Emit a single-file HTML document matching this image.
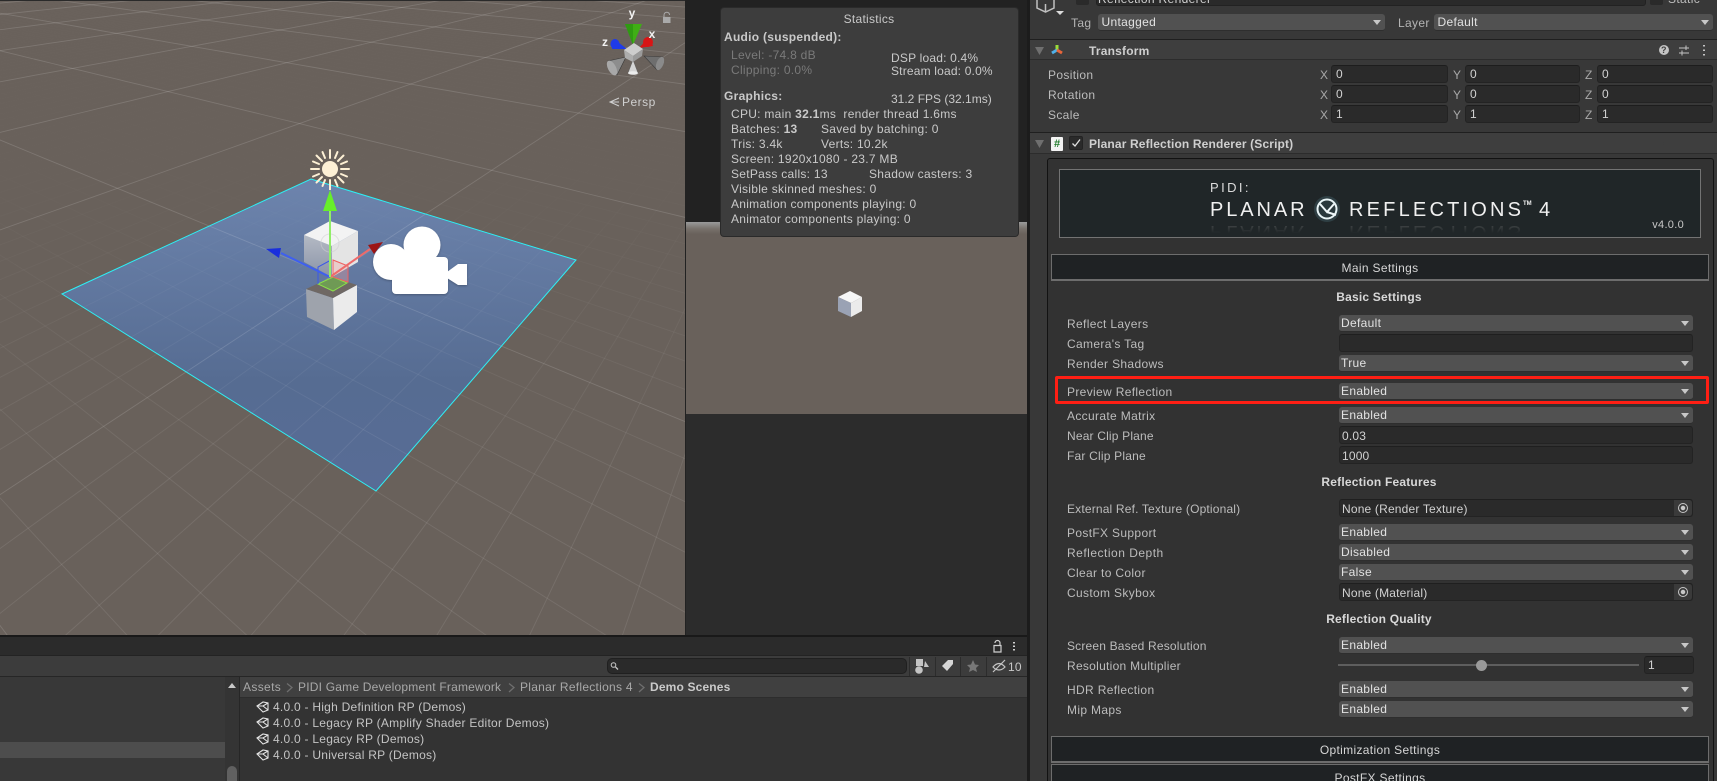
<!DOCTYPE html>
<html><head><meta charset="utf-8"><style>
html,body{margin:0;padding:0;width:1717px;height:781px;overflow:hidden;background:#1c1c1c}
body{position:relative;font-family:"Liberation Sans",sans-serif;font-size:12px;color:#c4c4c4}
div{position:absolute;box-sizing:border-box}
.t{white-space:nowrap;height:16px;line-height:16px;letter-spacing:.35px}
.l{left:1067px;color:#bcbcbc;letter-spacing:.34px}
.b{font-weight:bold;color:#d8d8d8;letter-spacing:.2px}
.c{transform:translateX(-50%)}
.dd{left:1339px;width:354px;height:16.5px;background:#515151;border-radius:3px;border-bottom:1px solid #2e2e2e;color:#e2e2e2;line-height:17px;padding-left:2px;letter-spacing:.32px}
.dd:after{content:"";position:absolute;right:4px;top:6px;border-left:4px solid transparent;border-right:4px solid transparent;border-top:5px solid #c8c8c8}
.f{left:1339px;width:354px;height:18px;background:#2a2a2a;border:1px solid #232323;border-top-color:#1f1f1f;border-radius:3px;color:#d2d2d2;line-height:18px;padding-left:2px;letter-spacing:.18px}
.v{height:18px;background:#2a2a2a;border:1px solid #232323;border-top-color:#1d1d1d;border-radius:3px;color:#d2d2d2;line-height:17px;padding-left:3px}
.pick{position:absolute;right:0;top:0;width:18px;height:16px;background:#3a3a3a;border-radius:0 3px 3px 0}
.pick:after{content:"";position:absolute;left:4px;top:3px;width:10px;height:10px;border:1px solid #c8c8c8;border-radius:50%;box-sizing:border-box;background:radial-gradient(circle,#c8c8c8 0 2px,transparent 2.5px)}
.bar{left:1051px;width:658px;height:27px;background:#1f2224;border:1px solid #6d6d6d;border-bottom-width:2px;color:#d6d6d6;text-align:center;line-height:27px;letter-spacing:.33px}
.s{color:#c9c9c9;font-size:12px;letter-spacing:.28px}
.d{color:#7a7a7a}
.w{color:#c4c4c4;letter-spacing:.25px}
.ax{font-size:12px;color:#a8a8a8}
svg{position:absolute;overflow:visible}
</style></head><body>

<!-- scene view -->
<div style="left:0;top:1px;width:685px;height:634px;background:#69615b;overflow:hidden">
<svg id="scene" width="685" height="634" viewBox="0 1 685 634" style="left:0;top:0">
<defs>
<linearGradient id="pl" gradientUnits="userSpaceOnUse" x1="0" y1="179" x2="0" y2="491"><stop offset="0" stop-color="#6d84ad"/><stop offset=".65" stop-color="#566c92"/><stop offset="1" stop-color="#586c96"/></linearGradient>
<linearGradient id="lc" x1="0" y1="0" x2="0" y2="1"><stop offset="0" stop-color="#b4bac4"/><stop offset="1" stop-color="#8b94a8"/></linearGradient>
</defs>
<polygon points="311,179 576,260 376,491 62,294" fill="url(#pl)"/>
<g id="grid"></g>
<polygon points="311,179 576,260 376,491 62,294" fill="none" stroke="#2cf0f5" stroke-width="1"/>

<!-- upper cube -->
<polygon points="304,235 332,246 332,277 304,262" fill="url(#lc)"/>
<polygon points="332,246 358,231 358,262 332,277" fill="#e4e4e4"/>
<polygon points="304,235 330,221 358,231 332,246" fill="#f3f3f3"/>
<circle cx="330" cy="243" r="9" fill="none" stroke="#cfd0d2" stroke-width="1" opacity=".55"/>
<!-- lower cube -->
<polygon points="306,289 333,298 334,330 307,317" fill="#9ea3ac"/>
<polygon points="333,298 357,285 357,312 334,330" fill="#ebebeb"/>
<polygon points="306,289 332,277 357,285 333,298" fill="#6f6864"/>
<!-- wire -->
<polygon points="318,284 333,277 347,283 333,291" fill="#6f9a55" stroke="#8be04a"/>
<path d="M318,284V267L331,260 M333,277V262" fill="none" stroke="#3a57e8" stroke-width="1"/>
<polygon points="333,260 348,266 348,282 333,277" fill="#f0a0a0" fill-opacity=".35" stroke="#ef6060"/>
<!-- axes -->
<line x1="330" y1="277" x2="281" y2="253" stroke="#3e5ff0" stroke-width="2"/>
<polygon points="266,249 281,248 279,258" fill="#1a2fdc"/>
<line x1="330" y1="277" x2="370" y2="249" stroke="#ee6a6a" stroke-width="2"/>
<polygon points="383,242 368,245 374,254" fill="#9c1414"/>
<line x1="330" y1="277" x2="330" y2="210" stroke="#92ee68" stroke-width="2"/>
<polygon points="330,190 323,211 337,211" fill="#67ee2a"/>
<!-- sun -->
<g stroke="#fdf0d5" stroke-width="2" stroke-linecap="round">
<circle cx="330" cy="169" r="8" fill="#fdf0d5" stroke="none"/>
<path d="M330,150V158M330,180V188M311,169H319M341,169H349M316.500,155.500L322,161M338,177L343.500,182.500M316.500,182.500L322,177M338,161L343.500,155.500M322.500,152L325,158M335,180L337.500,186M322.500,186L325,180M335,158L337.500,152M313,161.500L319,164M341,174L347,176.500M313,176.500L319,174M341,164L347,161.500"/>
</g>
<line x1="330" y1="188" x2="330" y2="190" stroke="#fdf0d5" stroke-width="2"/>
<!-- camera -->
<g fill="#fff" style="filter:drop-shadow(0 1px 1px rgba(0,0,0,.25))">
<circle cx="422" cy="245" r="18.500"/><circle cx="391" cy="262" r="18"/>
<polygon points="398,246 412,258 398,268"/>
<rect x="392" y="257" width="56" height="37" rx="4"/>
<polygon points="447,272 458,264 467,264 467,285 458,285 447,278"/>
</g>
<!-- gizmo -->
<polygon points="625,24 642,24 633,45" fill="#3fae15"/><polygon points="625,24 633,24 633,45" fill="#2f9a12"/>
<polygon points="627,49 614,39 612,49" fill="#1f3be8"/><ellipse cx="615" cy="44" rx="4.500" ry="5" fill="#1f3be8"/>
<polygon points="639,48 649,37 653,46" fill="#d81515"/><ellipse cx="648" cy="42" rx="5" ry="5" fill="#d81515"/>
<polygon points="626,57 608,61 617,75" fill="#8d8d8d" stroke="#3a3a3a" stroke-width=".6"/><ellipse cx="612" cy="68" rx="4" ry="8" fill="#a8a8a8" transform="rotate(-28 612 68)"/>
<polygon points="644,56 663,57 657,70" fill="#6e6e6e" stroke="#3a3a3a" stroke-width=".6"/><ellipse cx="660" cy="63.500" rx="3.500" ry="7" fill="#8a8a8a" transform="rotate(22 660 63.500)"/>
<polygon points="633,60 628,73 638,73" fill="#d4d4d4" stroke="#555" stroke-width=".4"/><ellipse cx="633" cy="73" rx="5" ry="1.800" fill="#ececec"/>
<polygon points="624,50 634,43 643,49 633,56" fill="#cdcdcd"/><polygon points="624,50 633,56 633,62 625,58" fill="#adadad"/><polygon points="643,49 633,56 633,62 642,56" fill="#9a9a9a"/>
<text x="632" y="17" fill="#f2f2f2" font-family="Liberation Sans" font-size="12" font-weight="bold" text-anchor="middle">y</text>
<text x="652" y="38" fill="#f2f2f2" font-family="Liberation Sans" font-size="12" font-weight="bold" text-anchor="middle">x</text>
<text x="605" y="46" fill="#f2f2f2" font-family="Liberation Sans" font-size="12" font-weight="bold" text-anchor="middle">z</text>
<path d="M664,17.500V15a2.800,2.800 0 0 1 5.600,0" fill="none" stroke="#aaa"/><rect x="663" y="17" width="7.500" height="6" fill="#aaa"/>
<path d="M619,98L610,102L619,106M610,102H619" fill="none" stroke="#d0d0d0"/>
<text x="622" y="106" fill="#d0d0d0" font-family="Liberation Sans" font-size="12" letter-spacing=".5">Persp</text>
</svg>
</div>
<div style="left:0;top:0;width:685px;height:1px;background:#2a2a2a"></div>

<!-- game view -->
<div style="left:685px;top:0;width:342px;height:635px;background:#222"></div>
<div style="left:686px;top:222px;width:341px;height:192px;background:linear-gradient(#9a9a9a 0,#77706a 7px,#69615b 12px,#69615b 100%)"></div>
<div style="left:686px;top:414px;width:341px;height:221px;background:#2c2c2c"></div>
<svg style="left:0;top:0" width="1717" height="781">
<polygon points="838,297 850,291 862,297 851,303" fill="#f6f6f6"/>
<polygon points="838,297 851,303 851,317 838,311" fill="#9aa2b4"/>
<polygon points="851,303 862,297 862,311 851,317" fill="#ebebeb"/>
</svg>
<div style="left:721px;top:8px;width:297px;height:228px;background:#3d3d3d;border-radius:3px;box-shadow:0 0 0 1px #2a2a2a"></div>
<div class="t s c" style="left:869px;top:11px">Statistics</div>
<div class="t s" style="left:724px;top:29px;font-weight:bold">Audio (suspended):</div>
<div class="t s d" style="left:731px;top:47px">Level: -74.8 dB</div>
<div class="t s d" style="left:731px;top:62px">Clipping: 0.0%</div>
<div class="t s" style="left:891px;top:50px;letter-spacing:.2px">DSP load: 0.4%</div>
<div class="t s" style="left:891px;top:63px;letter-spacing:.18px">Stream load: 0.0%</div>
<div class="t s" style="left:724px;top:88px;font-weight:bold">Graphics:</div>
<div class="t s" style="left:891px;top:91px;letter-spacing:.0px">31.2 FPS (32.1ms)</div>
<div class="t s" style="left:731px;top:106px">CPU: main <b>32.1</b>ms&nbsp; render thread 1.6ms</div>
<div class="t s" style="left:731px;top:121px">Batches: <b>13</b></div>
<div class="t s" style="left:821px;top:121px">Saved by batching: 0</div>
<div class="t s" style="left:731px;top:136px">Tris: 3.4k</div>
<div class="t s" style="left:821px;top:136px">Verts: 10.2k</div>
<div class="t s" style="left:731px;top:151px">Screen: 1920x1080 - 23.7 MB</div>
<div class="t s" style="left:731px;top:166px">SetPass calls: 13</div>
<div class="t s" style="left:869px;top:166px">Shadow casters: 3</div>
<div class="t s" style="left:731px;top:181px">Visible skinned meshes: 0</div>
<div class="t s" style="left:731px;top:196px">Animation components playing: 0</div>
<div class="t s" style="left:731px;top:211px">Animator components playing: 0</div>

<!-- inspector -->
<div style="left:1030px;top:0;width:687px;height:781px;background:#383838"></div>
<svg style="left:0;top:0" width="1717" height="781">
<path d="M1037,0V8L1045.500,12L1054,8V0M1045.500,12V4" fill="none" stroke="#c0c0c0" stroke-width="1.500"/>
<polygon points="1056,11 1064,11 1060,15" fill="#dcdcdc"/>
</svg>
<div style="left:1076px;top:-6px;width:13px;height:11px;background:#2a2a2a;border-radius:2px"></div>
<div style="left:1096px;top:-12px;width:550px;height:18px;background:#2a2a2a;border:1px solid #222;border-radius:3px"></div>
<div class="t" style="left:1098px;top:-9px;color:#d2d2d2">Reflection Renderer</div>
<div style="left:1650px;top:-8px;width:13px;height:13px;background:#2a2a2a;border-radius:2px"></div>
<div class="t" style="left:1668px;top:-9px;color:#bcbcbc">Static</div>
<div class="t" style="left:1071px;top:15px;color:#b4b4b4">Tag</div>
<div class="dd" style="left:1098px;top:14px;width:287px;padding-left:3.500px">Untagged</div>
<div class="t" style="left:1398px;top:15px;color:#b4b4b4">Layer</div>
<div class="dd" style="left:1434px;top:14px;width:279px;padding-left:3.500px">Default</div>

<div style="left:1030px;top:39px;width:687px;height:1px;background:#1f1f1f"></div>
<div style="left:1030px;top:40px;width:687px;height:20px;background:#3e3e3e;border-bottom:1px solid #2c2c2c"></div>
<svg style="left:0;top:0" width="1717" height="781">
<polygon points="1035,47 1044,47 1039.500,55" fill="#6f6f6f"/>
<path d="M1057,50V45" stroke="#9bdc3a" stroke-width="3"/><path d="M1057,50L1052,53" stroke="#4fb0e8" stroke-width="3"/><path d="M1057,50L1062,53" stroke="#e8653a" stroke-width="3"/>
<g><circle cx="1664" cy="50" r="5" fill="#c4c4c4"/><path d="M1679,48H1689M1679,53H1689M1686,45.500V50M1682,50.500V55.500" stroke="#c4c4c4" fill="none"/><path d="M1704,45V46.500M1704,49.500V51M1704,54V55.500" stroke="#c4c4c4" stroke-width="2"/></g>
<g transform="translate(0,93)"><circle cx="1664" cy="50" r="5" fill="#c4c4c4"/><path d="M1679,48H1689M1679,53H1689M1686,45.500V50M1682,50.500V55.500" stroke="#c4c4c4" fill="none"/><path d="M1704,45V46.500M1704,49.500V51M1704,54V55.500" stroke="#c4c4c4" stroke-width="2"/></g>
</svg>
<div class="t b" style="left:1089px;top:43px;color:#cfcfcf">Transform</div>
<div class="t" style="left:1661px;top:42px;font-size:9px;font-weight:bold;color:#3e3e3e">?</div>

<div class="t l" style="left:1048px;top:67px">Position</div>
<div class="t l" style="left:1048px;top:87px">Rotation</div>
<div class="t l" style="left:1048px;top:107px">Scale</div>
<div class="t ax" style="left:1320px;top:67px">X</div><div class="v" style="left:1331px;top:65px;width:117px;padding-left:4px">0</div>
<div class="t ax" style="left:1453px;top:67px">Y</div><div class="v" style="left:1465px;top:65px;width:115px;padding-left:4px">0</div>
<div class="t ax" style="left:1585px;top:67px">Z</div><div class="v" style="left:1597px;top:65px;width:116px;padding-left:4px">0</div>
<div class="t ax" style="left:1320px;top:87px">X</div><div class="v" style="left:1331px;top:85px;width:117px;padding-left:4px">0</div>
<div class="t ax" style="left:1453px;top:87px">Y</div><div class="v" style="left:1465px;top:85px;width:115px;padding-left:4px">0</div>
<div class="t ax" style="left:1585px;top:87px">Z</div><div class="v" style="left:1597px;top:85px;width:116px;padding-left:4px">0</div>
<div class="t ax" style="left:1320px;top:107px">X</div><div class="v" style="left:1331px;top:105px;width:117px;padding-left:4px">1</div>
<div class="t ax" style="left:1453px;top:107px">Y</div><div class="v" style="left:1465px;top:105px;width:115px;padding-left:4px">1</div>
<div class="t ax" style="left:1585px;top:107px">Z</div><div class="v" style="left:1597px;top:105px;width:116px;padding-left:4px">1</div>

<div style="left:1030px;top:132px;width:687px;height:1px;background:#1f1f1f"></div>
<div style="left:1030px;top:133px;width:687px;height:21px;background:#3e3e3e;border-bottom:1px solid #2c2c2c"></div>
<svg style="left:0;top:0" width="1717" height="781">
<polygon points="1035,140 1044,140 1039.500,148" fill="#6f6f6f"/>
</svg>
<div style="left:1051px;top:137px;width:12px;height:14px;background:#f4f4f4;border-radius:1px;color:#1e7a2a;font-size:11px;font-weight:bold;line-height:14px;text-align:center">#</div>
<div style="left:1069px;top:136px;width:14px;height:14px;background:#2a2a2a;border:1px solid #232323;border-radius:2px"></div>
<svg style="left:0;top:0" width="1717" height="781"><path d="M1072.500,143.500L1075,146L1080,139.500" fill="none" stroke="#e0e0e0" stroke-width="1.300"/></svg>
<div class="t b" style="left:1089px;top:136px;color:#cfcfcf;letter-spacing:.14px">Planar Reflection Renderer (Script)</div>
<div class="t" style="left:1661px;top:135px;font-size:9px;font-weight:bold;color:#3e3e3e">?</div>

<div style="left:1047px;top:158px;width:667px;height:630px;background:#323232;border:1px solid #121212;border-radius:3px"></div>
<div style="left:1059px;top:169px;width:642px;height:69px;background:#202628;border:1px solid #737373;overflow:hidden">
 <div class="t" style="left:150px;top:10px;font-size:13px;letter-spacing:2.400px;color:#dcdcdc">PIDI:</div>
 <div class="t" style="left:150px;top:29px;height:22px;line-height:22px;font-size:20px;letter-spacing:2.900px;color:#f0f0f0">PLANAR</div>
 <div class="t" style="left:289px;top:29px;height:22px;line-height:22px;font-size:20px;letter-spacing:3.200px;color:#f0f0f0">REFLECTIONS</div>
 <div class="t" style="left:463px;top:30px;font-size:6px;height:8px;line-height:8px;font-weight:bold;letter-spacing:0;color:#f0f0f0">TM</div>
 <div class="t" style="left:479px;top:29px;height:22px;line-height:22px;font-size:20px;color:#f0f0f0">4</div>
 <div class="t" style="left:150px;top:51px;height:22px;line-height:22px;font-size:20px;letter-spacing:2.900px;color:#8a8a8a;transform:scaleY(-1);opacity:.45;-webkit-mask-image:linear-gradient(to top,#000 0,transparent 55%)">PLANAR</div>
 <div class="t" style="left:289px;top:51px;height:22px;line-height:22px;font-size:20px;letter-spacing:3.200px;color:#8a8a8a;transform:scaleY(-1);opacity:.45;-webkit-mask-image:linear-gradient(to top,#000 0,transparent 55%)">REFLECTIONS</div>
 <div class="t" style="right:16px;top:47px;font-size:11px;letter-spacing:.3px;color:#c8c8c8">v4.0.0</div>
</div>
<svg style="left:0;top:0" width="1717" height="781">
<circle cx="1327" cy="209" r="13" fill="#5a8a96" opacity=".25"/>
<circle cx="1327" cy="209" r="9.500" fill="#29383c" stroke="#e8f4f6" stroke-width="2"/>
<path d="M1320,204L1327,212L1334,204M1327,212L1336,215" fill="none" stroke="#eef6f8" stroke-width="2"/>
</svg>

<div class="bar" style="top:254px">Main Settings</div>
<div class="t b c" style="left:1379px;top:289px">Basic Settings</div>
<div class="t l" style="top:316px">Reflect Layers</div><div class="dd" style="top:315px">Default</div>
<div class="t l" style="top:336px">Camera's Tag</div><div class="f" style="top:334px"></div>
<div class="t l" style="top:356px">Render Shadows</div><div class="dd" style="top:355px">True</div>
<div class="t l" style="top:384px">Preview Reflection</div><div class="dd" style="top:383px">Enabled</div>
<div style="left:1055px;top:376px;width:654px;height:28px;border:3px solid #ff1f14;border-radius:2px"></div>
<div class="t l" style="top:408px">Accurate Matrix</div><div class="dd" style="top:407px">Enabled</div>
<div class="t l" style="top:428px;letter-spacing:.18px">Near Clip Plane</div><div class="f" style="top:426px">0.03</div>
<div class="t l" style="top:448px;letter-spacing:.2px">Far Clip Plane</div><div class="f" style="top:446px">1000</div>
<div class="t b c" style="left:1379px;top:474px">Reflection Features</div>
<div class="t l" style="top:501px;letter-spacing:.17px">External Ref. Texture (Optional)</div><div class="f" style="top:499px">None (Render Texture)<span class="pick"></span></div>
<div class="t l" style="top:525px">PostFX Support</div><div class="dd" style="top:524px">Enabled</div>
<div class="t l" style="top:545px;letter-spacing:.5px">Reflection Depth</div><div class="dd" style="top:544px">Disabled</div>
<div class="t l" style="top:565px">Clear to Color</div><div class="dd" style="top:564px">False</div>
<div class="f" style="top:583px">None (Material)<span class="pick"></span></div><div class="t l" style="top:585px">Custom Skybox</div>
<div class="t b c" style="left:1379px;top:611px">Reflection Quality</div>
<div class="t l" style="top:638px;letter-spacing:.18px">Screen Based Resolution</div><div class="dd" style="top:637px">Enabled</div>
<div class="t l" style="top:658px;letter-spacing:.28px">Resolution Multiplier</div>
<div style="left:1338px;top:664px;width:301px;height:2px;background:#5e5e5e"></div>
<div style="left:1475.500px;top:659.500px;width:11px;height:11px;border-radius:50%;background:#9a9a9a"></div>
<div class="v" style="left:1644px;top:656px;width:50px">1</div>
<div class="t l" style="top:682px">HDR Reflection</div><div class="dd" style="top:681px">Enabled</div>
<div class="t l" style="top:702px">Mip Maps</div><div class="dd" style="top:701px">Enabled</div>
<div class="bar" style="top:736px">Optimization Settings</div>
<div class="bar" style="top:764px;height:30px">PostFX Settings</div>

<!-- bottom panel -->
<div style="left:0;top:635px;width:1027px;height:2px;background:#191919"></div>
<div style="left:0;top:637px;width:1027px;height:19px;background:#2b2b2b;border-bottom:1px solid #232323"></div>
<div style="left:0;top:656px;width:1027px;height:21px;background:#3c3c3c;border-bottom:1px solid #262626"></div>
<div style="left:0;top:677px;width:225px;height:104px;background:#383838"></div>
<div style="left:0;top:742px;width:225px;height:16px;background:#4d4d4d"></div>
<div style="left:225px;top:677px;width:14px;height:104px;background:#343434"></div>
<div style="left:227px;top:766px;width:10px;height:20px;border-radius:5px;background:#606060"></div>
<div style="left:239px;top:677px;width:1px;height:104px;background:#262626"></div>
<div style="left:240px;top:677px;width:787px;height:21px;background:#404040;border-bottom:1px solid #2d2d2d"></div>
<div style="left:240px;top:698px;width:787px;height:83px;background:#333"></div>
<div style="left:607px;top:658px;width:300px;height:16px;background:#2a2a2a;border:1px solid #202020;border-radius:5px"></div>
<svg style="left:0;top:0" width="1717" height="781">
<polygon points="228,688 236,688 232,683" fill="#c8c8c8"/>
<circle cx="613.500" cy="665" r="2.300" fill="none" stroke="#c8c8c8"/><path d="M615.500,667L618,669.500" stroke="#c8c8c8" stroke-width="1.300"/>
<path d="M909.500,657V676M935.500,657V676M960.500,657V676M986.500,657V676" stroke="#2c2c2c"/>
<rect x="916" y="659" width="7" height="7" fill="#c4c4c4"/><circle cx="919" cy="670" r="3.800" fill="#c4c4c4"/><polygon points="924,667 929,667 925,661" fill="#c4c4c4"/>
<polygon points="942,666 948,660 953,660 953,664 947,671" fill="#d6d6d6"/>
<polygon points="973,660 975,664.500 979,665 976,668 977,672 973,670 969,672 970,668 967,665 971,664.500" fill="#787878"/>
<path d="M993,667Q999,660 1005,667Q999,673 993,667Z" fill="none" stroke="#c4c4c4" stroke-width="1.200"/><path d="M993,672L1005,660" stroke="#c4c4c4" stroke-width="1.200"/>
<path d="M994,645.500H1001V652H994Z" fill="none" stroke="#d0d0d0" stroke-width="1.200"/><path d="M1000,645.500V643a2.500,2.500 0 0 0 -5,0" fill="none" stroke="#d0d0d0" stroke-width="1.200"/>
<path d="M1014,642V643.500M1014,645.500V647M1014,649V650.500" stroke="#d0d0d0" stroke-width="2"/>
<path d="M287,683.500L292,687.500L287,692" fill="none" stroke="#6e6e6e" stroke-width="1.300"/>
<path d="M509,683.500L514,687.500L509,692" fill="none" stroke="#6e6e6e" stroke-width="1.300"/>
<path d="M639,683.500L644,687.500L639,692" fill="none" stroke="#6e6e6e" stroke-width="1.300"/>
<g fill="none" stroke="#e4e4e4" stroke-width="1.100">
<path d="M257,706L263,702L268,703L268,710L263,712ZM257,706H263L268,703M263,706L268,710"/>
<path d="M257,722L263,718L268,719L268,726L263,728ZM257,722H263L268,719M263,722L268,726"/>
<path d="M257,738L263,734L268,735L268,742L263,744ZM257,738H263L268,735M263,738L268,742"/>
<path d="M257,754L263,750L268,751L268,758L263,760ZM257,754H263L268,751M263,754L268,758"/>
</g>
</svg>
<div class="t" style="left:1008px;top:659px;color:#c8c8c8;letter-spacing:.2px">10</div>
<div class="t" style="left:243px;top:679px;color:#a8a8a8;letter-spacing:.35px">Assets</div>
<div class="t" style="left:298px;top:679px;color:#a8a8a8;letter-spacing:.21px">PIDI Game Development Framework</div>
<div class="t" style="left:520px;top:679px;color:#a8a8a8;letter-spacing:.27px">Planar Reflections 4</div>
<div class="t" style="left:650px;top:679px;color:#cacaca;font-weight:bold;letter-spacing:.16px">Demo Scenes</div>
<div class="t w" style="left:273px;top:699px">4.0.0 - High Definition RP (Demos)</div>
<div class="t w" style="left:273px;top:715px">4.0.0 - Legacy RP (Amplify Shader Editor Demos)</div>
<div class="t w" style="left:273px;top:731px">4.0.0 - Legacy RP (Demos)</div>
<div class="t w" style="left:273px;top:747px">4.0.0 - Universal RP (Demos)</div>

<script>
(function(){
var P=[[311,179],[576,260],[376,491],[62,294]];
var x0=P[0][0],y0=P[0][1],x1=P[1][0],y1=P[1][1],x2=P[2][0],y2=P[2][1],x3=P[3][0],y3=P[3][1];
var dx1=x1-x2,dx2=x3-x2,dy1=y1-y2,dy2=y3-y2,sx=x0-x1+x2-x3,sy=y0-y1+y2-y3;
var det=dx1*dy2-dx2*dy1;
var g=(sx*dy2-dx2*sy)/det,h=(dx1*sy-sx*dy1)/det;
var a=x1-x0+g*x1,b=x3-x0+h*x3,c=x0,d=y1-y0+g*y1,e=y3-y0+h*y3,f=y0;
function pr(u,v){var w=g*u+h*v+1;return w>0.04?[(a*u+b*v+c)/w,(d*u+e*v+f)/w]:null;}
var out=[];
function line(fn,maj){
 var prev=null;
 for(var t=-12;t<=12.001;t+=0.125){
  var p=fn(t);
  if(p&&prev&&!(Math.max(p[0],prev[0])<0||Math.min(p[0],prev[0])>685||Math.max(p[1],prev[1])<0||Math.min(p[1],prev[1])>640)){
   var ym=(p[1]+prev[1])/2,k=Math.min(1,Math.max(0,(ym-170)/330));
   var al=maj?0.14:0.008+0.085*k;
   out.push('<line x1="'+prev[0].toFixed(1)+'" y1="'+prev[1].toFixed(1)+'" x2="'+p[0].toFixed(1)+'" y2="'+p[1].toFixed(1)+'" stroke="#fff" stroke-width=".9" stroke-opacity="'+al.toFixed(3)+'"/>');
  }
  prev=p;
 }
}
for(var i=-120;i<=130;i++){
 var q=i/10,maj=((i-5)%10===0);
 (function(q,maj){line(function(t){return pr(q,t)},maj);line(function(t){return pr(t,q)},maj);})(q,maj);
}
document.getElementById('grid').innerHTML=out.join('');
})();
</script>
</body></html>
